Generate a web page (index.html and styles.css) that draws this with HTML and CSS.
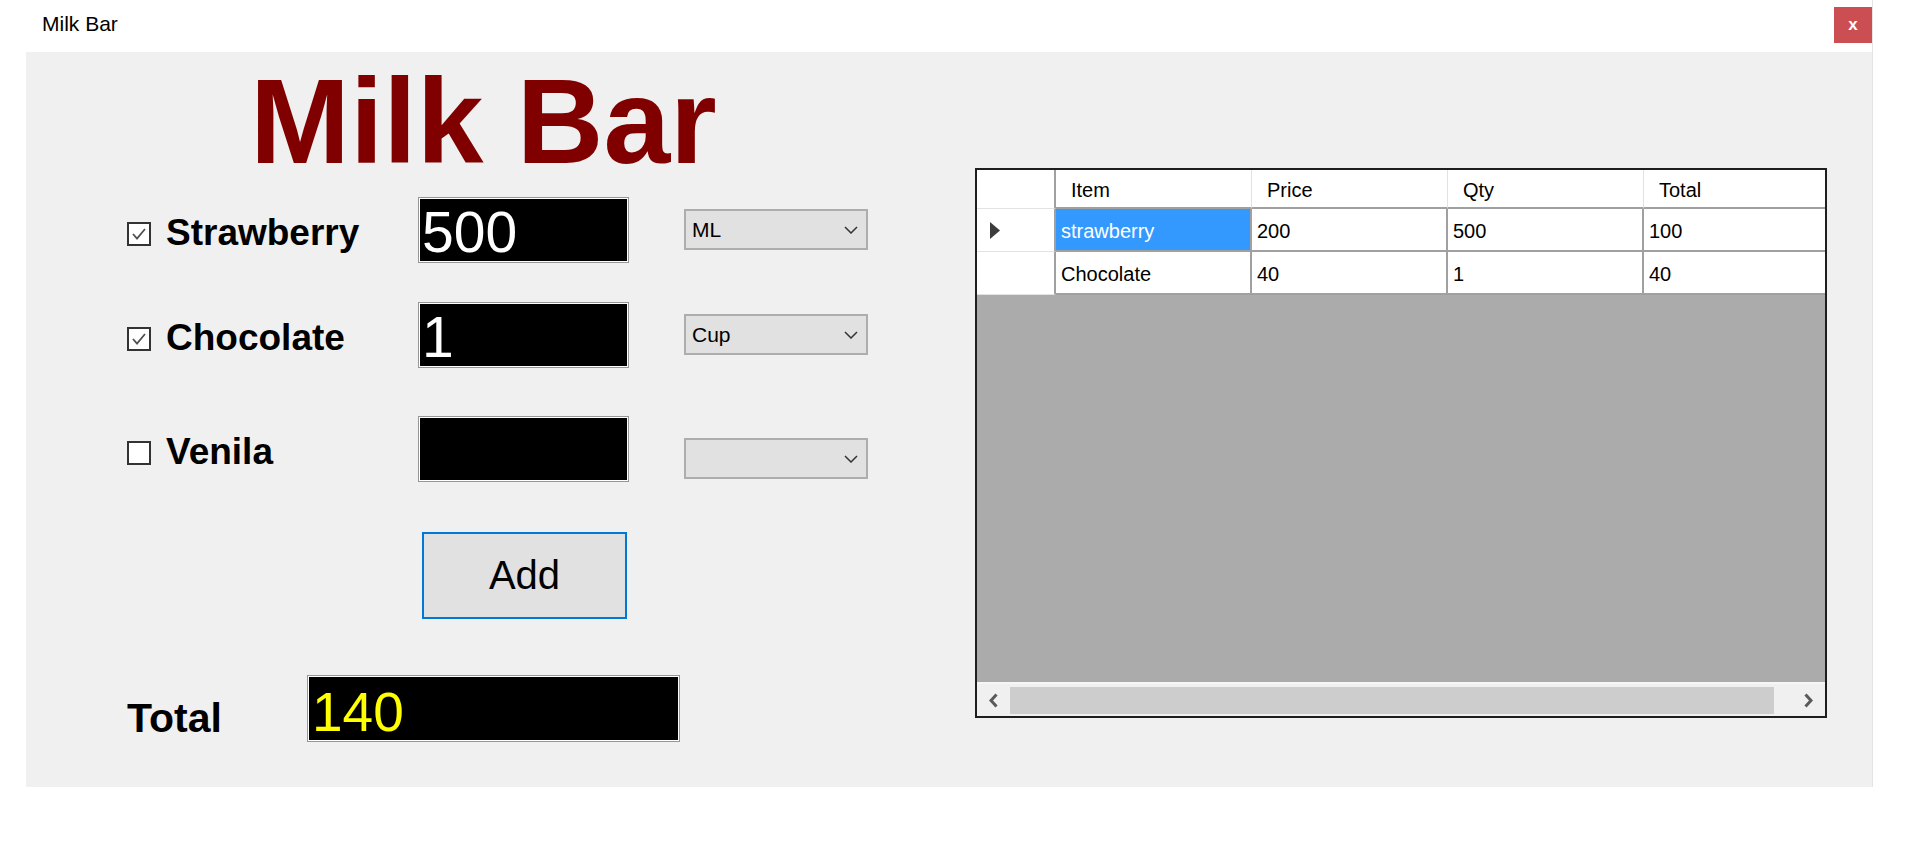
FILE: index.html
```html
<!DOCTYPE html>
<html>
<head>
<meta charset="utf-8">
<title>Milk Bar</title>
<link rel="stylesheet" href="styles.css">
</head>
<body>
<div class="window">
  <div class="titlebar">
    <span class="title">Milk Bar</span>
    <button class="close">x</button>
  </div>
  <div class="panel">
    <div class="form">
      <h1 class="heading">Milk Bar</h1>

      <div class="row first">
        <label class="check">
          <span class="box"><svg width="20" height="20" viewBox="0 0 20 20"><polyline points="4,10 8,14.5 16,5" fill="none" stroke="#505050" stroke-width="1.8"/></svg></span>
          <span class="lbl">Strawberry</span>
        </label>
        <div class="tb">500</div>
        <div class="combo"><span>ML</span><svg width="14" height="8" viewBox="0 0 14 8"><polyline points="1,1 7,7 13,1" fill="none" stroke="#333" stroke-width="1.5"/></svg></div>
      </div>

      <div class="row">
        <label class="check">
          <span class="box"><svg width="20" height="20" viewBox="0 0 20 20"><polyline points="4,10 8,14.5 16,5" fill="none" stroke="#505050" stroke-width="1.8"/></svg></span>
          <span class="lbl">Chocolate</span>
        </label>
        <div class="tb">1</div>
        <div class="combo"><span>Cup</span><svg width="14" height="8" viewBox="0 0 14 8"><polyline points="1,1 7,7 13,1" fill="none" stroke="#333" stroke-width="1.5"/></svg></div>
      </div>

      <div class="row third">
        <label class="check">
          <span class="box"></span>
          <span class="lbl">Venila</span>
        </label>
        <div class="tb"></div>
        <div class="combo low"><span></span><svg width="14" height="8" viewBox="0 0 14 8"><polyline points="1,1 7,7 13,1" fill="none" stroke="#333" stroke-width="1.5"/></svg></div>
      </div>

      <button class="add">Add</button>

      <div class="total-row">
        <span class="total-lbl">Total</span>
        <div class="tb total">140</div>
      </div>
    </div>

    <div class="grid">
      <div class="dg-row dg-head">
        <div class="hc corner"></div>
        <div class="hc">Item</div>
        <div class="hc">Price</div>
        <div class="hc">Qty</div>
        <div class="hc last">Total</div>
      </div>
      <div class="dg-row dg-data">
        <div class="rh"><svg width="10" height="17" viewBox="0 0 10 17"><polygon points="0,0 10,8.5 0,17" fill="#3c3c3c"/></svg></div>
        <div class="dc sel">strawberry</div>
        <div class="dc">200</div>
        <div class="dc">500</div>
        <div class="dc last">100</div>
      </div>
      <div class="dg-row dg-data">
        <div class="rh"></div>
        <div class="dc">Chocolate</div>
        <div class="dc">40</div>
        <div class="dc">1</div>
        <div class="dc last">40</div>
      </div>
      <div class="dg-empty"></div>
      <div class="sb">
        <div class="sb-btn"><svg width="9" height="15" viewBox="0 0 9 15"><polyline points="7.5,1.5 2,7.5 7.5,13.5" fill="none" stroke="#5a5a5a" stroke-width="3"/></svg></div>
        <div class="sb-track"><div class="sb-thumb"></div></div>
        <div class="sb-btn"><svg width="9" height="15" viewBox="0 0 9 15"><polyline points="1.5,1.5 7,7.5 1.5,13.5" fill="none" stroke="#5a5a5a" stroke-width="3"/></svg></div>
      </div>
    </div>
  </div>
</div>
</body>
</html>
```
FILE: styles.css
```css
html, body {
  margin: 0;
  padding: 0;
  background: #ffffff;
}

body {
  font-family: "Liberation Sans", Arial, sans-serif;
  color: #000;
  width: 1920px;
  height: 843px;
  overflow: hidden;
}

.window {
  width: 1872px;
  height: 787px;
  border-right: 1px solid #e4e4e4;
  display: flex;
  flex-direction: column;
}

.titlebar {
  height: 52px;
  flex: none;
  display: flex;
  justify-content: space-between;
  align-items: flex-start;
  padding-left: 42px;
  box-sizing: border-box;
}

.title {
  font-size: 21px;
  line-height: 21px;
  margin-top: 13px;
}

.close {
  width: 38px;
  height: 36px;
  margin-top: 7px;
  padding: 0;
  border: 0;
  background: #cb4e52;
  color: #ffffff;
  font-family: "Liberation Sans", Arial, sans-serif;
  font-weight: bold;
  font-size: 17px;
  line-height: 36px;
}

.panel {
  margin-left: 26px;
  height: 735px;
  flex: none;
  background: #f0f0f0;
  display: flex;
}

.form {
  width: 949px;
  flex: none;
  display: flex;
  flex-direction: column;
  align-items: flex-start;
}

.heading {
  margin: 9px 0 0 224px;
  font-size: 120px;
  line-height: 120px;
  font-weight: bold;
  color: #800000;
  white-space: nowrap;
}

.row {
  display: grid;
  grid-template-columns: 236px 211px 184px;
  column-gap: 55px;
  align-items: start;
  padding-left: 101px;
  margin-top: 39px;
}

.row.first {
  margin-top: 16px;
}

.row.third {
  margin-top: 48px;
}

.check {
  display: flex;
  align-items: center;
  gap: 15px;
  margin-top: 17px;
}

.box {
  width: 24px;
  height: 24px;
  box-sizing: border-box;
  border: 2px solid #333333;
  background: #ffffff;
  display: flex;
  align-items: center;
  justify-content: center;
  margin-top: 3px;
}

.box svg {
  display: block;
}

.lbl {
  font-size: 37px;
  line-height: 37px;
  font-weight: bold;
  white-space: nowrap;
}

.tb {
  height: 66px;
  box-sizing: border-box;
  border: 1px solid #969696;
  box-shadow: inset 0 0 0 1px #ffffff;
  background: #000000;
  color: #ffffff;
  font-size: 57px;
  line-height: 56px;
  padding: 6px 0 0 3px;
  white-space: nowrap;
}

.combo {
  margin-top: 12px;
  height: 41px;
  box-sizing: border-box;
  border: 2px solid #adadad;
  background: #e1e1e1;
  display: flex;
  align-items: center;
  justify-content: space-between;
  padding: 0 8px 0 6px;
  font-size: 21px;
}

.combo.low {
  margin-top: 22px;
}

.add {
  margin: 50px 0 0 396px;
  width: 205px;
  height: 87px;
  box-sizing: border-box;
  border: 2px solid #0078d7;
  background: #e1e1e1;
  color: #000;
  font-family: "Liberation Sans", Arial, sans-serif;
  font-size: 40px;
  padding: 0;
}

.total-row {
  margin-top: 56px;
  padding-left: 101px;
  display: flex;
  align-items: flex-start;
}

.total-lbl {
  width: 180px;
  font-size: 41px;
  line-height: 41px;
  font-weight: bold;
  margin-top: 23px;
}

.tb.total {
  width: 373px;
  height: 67px;
  color: #ffff00;
  font-size: 55px;
  line-height: 56px;
  padding: 8px 0 0 4px;
}

/* data grid */
.grid {
  margin-top: 116px;
  width: 852px;
  height: 550px;
  flex: none;
  box-sizing: border-box;
  border: 2px solid #1e1e1e;
  background: #ababab;
  display: flex;
  flex-direction: column;
  font-size: 20px;
  overflow: hidden;
}

.dg-row {
  display: grid;
  grid-template-columns: 79px 196px 196px 196px 181px;
  background: #ffffff;
  flex: none;
}

.dg-head {
  height: 39px;
}

.dg-data {
  height: 43px;
}

.hc {
  box-sizing: border-box;
  border-right: 1px solid #e2e2e2;
  border-bottom: 2px solid #a0a0a0;
  padding: 3px 0 0 15px;
  display: flex;
  align-items: center;
}

.hc.corner {
  border-right: 2px solid #a0a0a0;
  border-bottom: 1px solid #e2e2e2;
}

.hc.last,
.dc.last {
  border-right: 0;
}

.rh {
  box-sizing: border-box;
  border-right: 2px solid #a0a0a0;
  border-bottom: 1px solid #e2e2e2;
  padding-left: 13px;
  display: flex;
  align-items: center;
}

.dc {
  box-sizing: border-box;
  border-right: 2px solid #a0a0a0;
  border-bottom: 2px solid #a0a0a0;
  padding: 3px 0 0 5px;
  display: flex;
  align-items: center;
}

.dc.sel {
  background: #3399ff;
  color: #ffffff;
}

.dg-empty {
  flex: 1;
}

.sb {
  height: 34px;
  flex: none;
  box-sizing: border-box;
  border-top: 2px solid #f6f6f6;
  background: #f0f0f0;
  display: flex;
  align-items: stretch;
}

.sb-btn {
  width: 33px;
  flex: none;
  display: flex;
  align-items: center;
  justify-content: center;
}

.sb-btn svg {
  display: block;
}

.sb-track {
  flex: 1;
  display: flex;
  align-items: center;
}

.sb-thumb {
  width: 764px;
  height: 27px;
  background: #cdcdcd;
}
```
